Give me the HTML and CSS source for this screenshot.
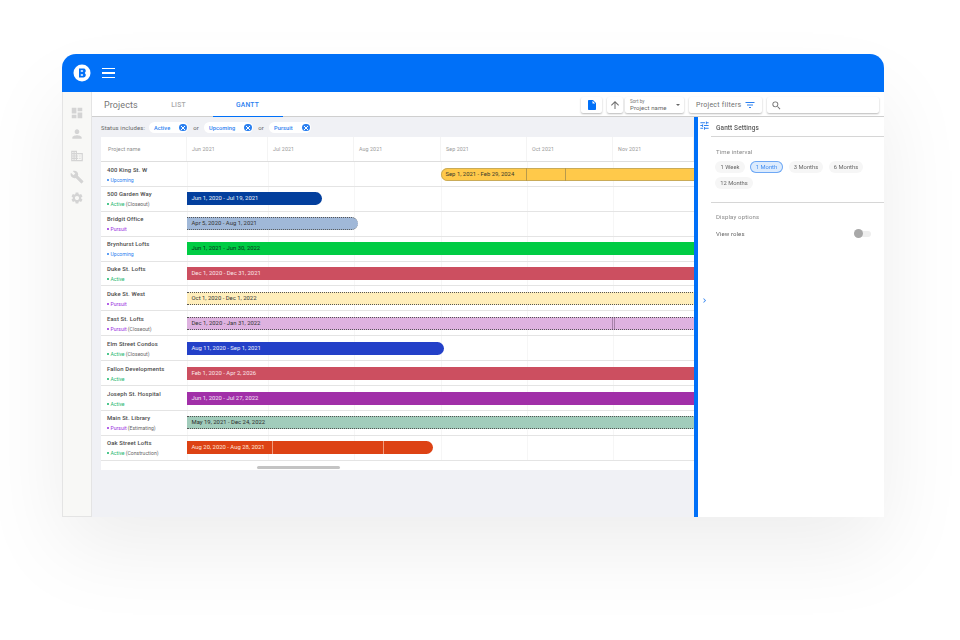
FILE: index.html
```html
<!DOCTYPE html>
<html lang="en">
<head>
<meta charset="utf-8">
<title>Gantt</title>
<link rel="stylesheet" href="styles.css">
</head>
<body>
<div class="window">
  <header class="appbar">
    <svg class="logo" viewBox="0 0 18 18"><circle cx="9" cy="9" r="8.5" fill="#fff"/><path d="M6 4.6h4.6a2.2 2.2 0 0 1 1.5 3.8l-.4.6.4.6a2.2 2.2 0 0 1-1.5 3.8H6z" fill="#0070f8"/><rect x="7.6" y="6.3" width="2.6" height="1.5" rx=".7" fill="#fff"/><rect x="7.6" y="10.2" width="2.6" height="1.5" rx=".7" fill="#fff"/></svg>
    <div class="burger"><span></span><span></span><span></span></div>
  </header>
  <div class="shell">
    <nav class="sidebar">
      <svg class="navicon" viewBox="0 0 24 24"><path d="M3 13h8V3H3v10zm0 8h8v-6H3v6zm10 0h8V11h-8v10zm0-18v6h8V3h-8z"/></svg>
      <svg class="navicon" viewBox="0 0 24 24"><path d="M12 12c2.21 0 4-1.79 4-4s-1.79-4-4-4-4 1.79-4 4 1.79 4 4 4zm0 2c-2.67 0-8 1.34-8 4v2h16v-2c0-2.66-5.33-4-8-4z"/></svg>
      <svg class="navicon" viewBox="0 0 24 24"><path d="M12 7V3H2v18h20V7H12zM6 19H4v-2h2v2zm0-4H4v-2h2v2zm0-4H4V9h2v2zm0-4H4V5h2v2zm4 12H8v-2h2v2zm0-4H8v-2h2v2zm0-4H8V9h2v2zm0-4H8V5h2v2zm10 12h-8v-2h2v-2h-2v-2h2v-2h-2V9h8v10zm-2-8h-2v2h2v-2zm0 4h-2v2h2v-2z"/></svg>
      <svg class="navicon" viewBox="0 0 24 24"><path d="M22.7 19l-9.1-9.1c.9-2.3.4-5-1.5-6.9-2-2-5-2.4-7.4-1.3L9 6 6 9 1.6 4.7C.4 7.1.9 10.1 2.9 12.1c1.9 1.9 4.6 2.4 6.9 1.5l9.1 9.1c.4.4 1 .4 1.4 0l2.3-2.3c.5-.4.5-1.1.1-1.4z"/></svg>
      <svg class="navicon" viewBox="0 0 24 24"><path d="M19.14 12.94c.04-.3.06-.61.06-.94 0-.32-.02-.64-.07-.94l2.03-1.58c.18-.14.23-.41.12-.61l-1.92-3.32c-.12-.22-.37-.29-.59-.22l-2.39.96c-.5-.38-1.03-.7-1.62-.94l-.36-2.54c-.04-.24-.24-.41-.48-.41h-3.84c-.24 0-.43.17-.47.41l-.36 2.54c-.59.24-1.13.57-1.62.94l-2.39-.96c-.22-.08-.47 0-.59.22L2.74 8.87c-.12.21-.08.47.12.61l2.03 1.58c-.05.3-.09.63-.09.94s.02.64.07.94l-2.03 1.58c-.18.14-.23.41-.12.61l1.92 3.32c.12.22.37.29.59.22l2.39-.96c.5.38 1.03.7 1.62.94l.36 2.54c.05.24.24.41.48.41h3.84c.24 0 .44-.17.47-.41l.36-2.54c.59-.24 1.13-.56 1.62-.94l2.39.96c.22.08.47 0 .59-.22l1.92-3.32c.12-.22.07-.47-.12-.61l-2.01-1.58zM12 15.6c-1.98 0-3.6-1.62-3.6-3.6s1.62-3.6 3.6-3.6 3.6 1.62 3.6 3.6-1.62 3.6-3.6 3.6z"/></svg>
    </nav>
    <main class="main">
      <div class="topbar">
        <h1 class="title">Projects</h1>
        <div class="tab tab-list">LIST</div>
        <div class="tab tab-gantt">GANTT</div>
        <div class="tools">
          <button class="tool tool-doc"><svg viewBox="0 0 24 24"><path d="M14 2H6c-1.1 0-2 .9-2 2v16c0 1.1.9 2 2 2h12c1.1 0 2-.9 2-2V8l-6-6zm-1 7V3.5L18.5 9H13z"/></svg></button>
          <button class="tool tool-up"><svg viewBox="0 0 24 24"><path d="M4 12l1.41 1.41L11 7.83V20h2V7.83l5.58 5.59L20 12l-8-8-8 8z"/></svg></button>
          <div class="tool tool-sort"><div class="sort-text"><span class="sort-label">Sort by</span><span class="sort-value">Project name</span></div><i class="caret"></i></div>
          <button class="tool tool-filter"><span>Project filters</span><svg viewBox="0 0 24 24"><path d="M10 18h4v-2h-4v2zM3 6v2h18V6H3zm3 7h12v-2H6v2z"/></svg></button>
          <div class="tool tool-search"><svg viewBox="0 0 24 24"><path d="M15.5 14h-.79l-.28-.27A6.47 6.47 0 0 0 16 9.5 6.5 6.5 0 1 0 9.5 16c1.61 0 3.09-.59 4.23-1.57l.27.28v.79l5 4.99L20.49 19l-4.99-5zm-6 0C7.01 14 5 11.99 5 9.5S7.01 5 9.5 5 14 7.01 14 9.5 11.99 14 9.5 14z"/></svg></div>
        </div>
      </div>
      <div class="content">
        <section class="gantt">
          <div class="filters">
            <span class="filters-label">Status includes:</span>
            <span class="chip chip-active">Active<i class="x"></i></span><span class="or">or</span>
            <span class="chip chip-upcoming">Upcoming<i class="x"></i></span><span class="or">or</span>
            <span class="chip chip-pursuit">Pursuit<i class="x"></i></span>
          </div>
          <div class="table">
            <div class="row head">
              <div class="name-head">Project name</div>
              <div class="months"><span style="width:81px">Jun 2021</span><span style="width:86px">Jul 2021</span><span style="width:87px">Aug 2021</span><span style="width:86px">Sep 2021</span><span style="width:86px">Oct 2021</span><span style="width:81px">Nov 2021</span></div>
            </div>

            <div class="row">
              <div class="name"><b>400 King St. W</b><small><em class="st-up">Upcoming</em></small></div>
              <div class="track"><div class="bar yellow" style="margin-left:254px;width:300px"><span class="seg" style="width:86px">Sep 1, 2021 - Feb 29, 2024</span><span class="seg" style="width:39px"></span></div></div>
            </div>
            <div class="row">
              <div class="name"><b>500 Garden Way</b><small><em class="st-act">Active</em> (Closeout)</small></div>
              <div class="track"><div class="bar navy end" style="width:135px"><span class="seg">Jun 1, 2020 - Jul 19, 2021</span></div></div>
            </div>
            <div class="row">
              <div class="name"><b>Bridgit Office</b><small><em class="st-pur">Pursuit</em></small></div>
              <div class="track"><div class="bar slate dash end" style="width:171px"><span class="seg">Apr 5, 2020 - Aug 1, 2021</span></div></div>
            </div>
            <div class="row">
              <div class="name"><b>Brynhurst Lofts</b><small><em class="st-up">Upcoming</em></small></div>
              <div class="track"><div class="bar green" style="width:560px"><span class="seg">Jun 1, 2021 - Jun 30, 2022</span></div></div>
            </div>
            <div class="row">
              <div class="name"><b>Duke St. Lofts</b><small><em class="st-act">Active</em></small></div>
              <div class="track"><div class="bar rose" style="width:560px"><span class="seg">Dec 1, 2020 - Dec 31, 2021</span></div></div>
            </div>
            <div class="row">
              <div class="name"><b>Duke St. West</b><small><em class="st-pur">Pursuit</em></small></div>
              <div class="track"><div class="bar cream dash" style="width:560px"><span class="seg">Oct 1, 2020 - Dec 1, 2022</span></div></div>
            </div>
            <div class="row">
              <div class="name"><b>East St. Lofts</b><small><em class="st-pur">Pursuit</em> (Closeout)</small></div>
              <div class="track"><div class="bar lilac dash" style="width:560px"><span class="seg seg-split" style="width:420px">Dec 1, 2020 - Jan 31, 2022</span></div></div>
            </div>
            <div class="row">
              <div class="name"><b>Elm Street Condos</b><small><em class="st-act">Active</em> (Closeout)</small></div>
              <div class="track"><div class="bar blue end" style="width:257px"><span class="seg">Aug 11, 2020 - Sep 1, 2021</span></div></div>
            </div>
            <div class="row">
              <div class="name"><b>Fallon Developments</b><small><em class="st-act">Active</em></small></div>
              <div class="track"><div class="bar rose" style="width:560px"><span class="seg">Feb 1, 2020 - Apr 2, 2026</span></div></div>
            </div>
            <div class="row">
              <div class="name"><b>Joseph St. Hospital</b><small><em class="st-act">Active</em></small></div>
              <div class="track"><div class="bar purple" style="width:560px"><span class="seg">Jun 1, 2020 - Jul 27, 2022</span></div></div>
            </div>
            <div class="row">
              <div class="name"><b>Main St. Library</b><small><em class="st-pur">Pursuit</em> (Estimating)</small></div>
              <div class="track"><div class="bar mint dash" style="width:560px"><span class="seg">May 19, 2021 - Dec 24, 2022</span></div></div>
            </div>
            <div class="row">
              <div class="name"><b>Oak Street Lofts</b><small><em class="st-act">Active</em> (Construction)</small></div>
              <div class="track"><div class="bar orange end" style="width:246px"><span class="seg seg-light" style="width:86px">Aug 20, 2020 - Aug 28, 2021</span><span class="seg seg-light" style="width:111px"></span></div></div>
            </div>
            <div class="scrollzone"><div class="scrollthumb"></div></div>
          </div>
        </section>
        <div class="splitter"></div>
        <aside class="panel">
          <div class="gutter">
            <svg class="tune" viewBox="0 0 24 24"><path d="M3 17v2h6v-2H3zM3 5v2h10V5H3zm10 16v-2h8v-2h-8v-2h-2v6h2zM7 9v2H3v2h4v2h2V9H7zm14 4v-2H11v2h10zm-6-4h2V7h4V5h-4V3h-2v6z"/></svg>
            <svg class="chev" viewBox="0 0 24 24"><path d="M10 6L8.59 7.41 13.17 12l-4.58 4.59L10 18l6-6z"/></svg>
          </div>
          <div class="panel-body">
            <h2 class="panel-title">Gantt Settings</h2>
            <div class="section">
              <div class="section-label">Time interval</div>
              <div class="pills">
                <span class="pill pill-week">1 Week</span>
                <span class="pill pill-month">1 Month</span>
                <span class="pill pill-m">3 Months</span>
                <span class="pill pill-m">6 Months</span>
                <span class="pill pill-y">12 Months</span>
              </div>
            </div>
            <div class="section section-display">
              <div class="section-label">Display options</div>
              <div class="option"><span>View roles</span><span class="switch"><i></i></span></div>
            </div>
          </div>
        </aside>
      </div>
    </main>
  </div>
</div>
</body>
</html>
```
FILE: styles.css
```css
* { box-sizing: border-box; }
html, body { margin: 0; height: 100%; }
body {
  background: #fff;
  overflow: hidden;
  font-family: Roboto, "Liberation Sans", sans-serif;
  padding: 54px 76px 0 62px;
}
.window {
  width: 822px;
  height: 463px;
  border-radius: 14px 14px 0 0;
  overflow: hidden;
  display: flex;
  flex-direction: column;
  background: #fff;
  filter: blur(.32px);
}
body::before {
  content: "";
  position: absolute;
  left: 62px; top: 70px;
  width: 822px; height: 447px;
  box-shadow: 0 30px 80px rgba(0,0,0,.075);
  z-index: -1;
}
.appbar {
  height: 38px;
  background: #0070f8;
  display: flex;
  align-items: center;
  padding-left: 11px;
  flex: none;
}
.logo { width: 18px; height: 18px; }
.burger { margin-left: 11px; display: flex; flex-direction: column; gap: 3px; width: 13px; }
.burger span { display: block; height: 1.6px; background: #fff; }
.shell { flex: 1; display: flex; min-height: 0; }
.sidebar {
  width: 30px;
  background: #f8f8f6;
  border-left: 1px solid #e4e4e4;
  border-right: 1px solid #e4e4e4;
  border-bottom: 1px solid #e4e4e4;
  display: flex;
  flex-direction: column;
  align-items: center;
  padding-top: 14px;
  gap: 7.3px;
  flex: none;
}
.navicon { width: 14px; height: 14px; fill: #d4d4d4; }
.main { flex: 1; display: flex; flex-direction: column; min-width: 0; }
.topbar {
  height: 25px;
  flex: none;
  background: #fff;
  border-bottom: 1px solid #cfcfcf;
  display: flex;
  align-items: stretch;
  padding-left: 12px;
}
.title { margin: 0; width: 56.5px; font-size: 9px; font-weight: 400; color: #757575; line-height: 26px; letter-spacing: .1px; }
.tab { font-size: 6.7px; line-height: 27px; text-align: center; font-weight: 500; letter-spacing: .25px; }
.tab-list { width: 36px; color: #a8a8a8; }
.tab-gantt { width: 70px; margin-left: 16px; color: #2b80f0; border-bottom: 1px solid #0070f8; height: 25px; }
.tools { margin-left: auto; padding: 5px 5px 0 0; display: flex; gap: 5px; align-items: flex-start; }
.tool {
  height: 16px;
  background: #fff;
  border: 0;
  border-radius: 2px;
  padding: 0;
  box-shadow: 0 1px 2px rgba(0,0,0,.28);
  display: flex;
  align-items: center;
  font-family: inherit;
}
.tool svg { width: 12px; height: 12px; flex: none; }
.tool-doc { width: 21px; justify-content: center; }
.tool-doc svg { fill: #0070f8; }
.tool-up { width: 16px; justify-content: center; }
.tool-up svg { fill: #6e6e6e; }
.tool-sort { width: 59px; margin-left: -3px; padding: 0 4px 0 5px; justify-content: space-between; }
.sort-text { display: flex; flex-direction: column; }
.sort-label { font-size: 4.6px; line-height: 5px; color: #777; }
.sort-value { font-size: 6px; line-height: 7px; color: #666; letter-spacing: .1px; }
.caret { width: 0; height: 0; border: 2.2px solid transparent; border-top: 2.2px solid #666; border-bottom: 0; }
.tool-filter { width: 73px; padding: 0 6px 0 7px; justify-content: space-between; font-size: 7px; color: #707070; letter-spacing: .25px; }
.tool-filter svg { fill: #2b80f0; }
.tool-search { width: 112px; padding-left: 4px; }
.tool-search svg { width: 11px; height: 11px; fill: #707070; }

.content { flex: 1; display: flex; min-height: 0; }
.gantt { width: 602px; background: #f0f1f5; padding-left: 9px; flex: none; }
.filters { height: 20px; padding-top: 1px; display: flex; align-items: center; font-size: 6px; color: #666; letter-spacing: .1px; }
.filters-label { width: 48px; }
.chip {
  height: 11px;
  background: #fff;
  border-radius: 6px;
  display: flex;
  align-items: center;
  justify-content: space-between;
  color: #2b80f0;
  font-size: 5.6px;
  font-weight: 500;
  padding: 0 1.5px 0 5px;
}
.chip-active { width: 39px; }
.chip-upcoming { width: 49px; }
.chip-pursuit { width: 42px; }
.or { width: 16px; text-align: center; font-size: 6px; }
.x { width: 7.5px; height: 7.5px; border-radius: 50%; background: #2b80f0; position: relative; flex: none; }
.x::before { content: ""; position: absolute; left: 1.75px; top: 1.75px; width: 4px; height: 4px; background:
  linear-gradient(45deg, transparent 42%, #fff 42%, #fff 58%, transparent 58%),
  linear-gradient(-45deg, transparent 42%, #fff 42%, #fff 58%, transparent 58%); }

.table { background: #fff; width: 593px; }
.row { display: flex; height: 24.9px; border-bottom: 1px solid #e4e4e4; }
.head { height: 25px; border-bottom: 1px solid #dedede; }
.name-head { width: 86px; padding-left: 7px; font-size: 5.3px; color: #8e8e8e; line-height: 24px; border-right: 1px solid #f4f4f4; flex: none; letter-spacing: .1px; }
.months { display: flex; flex: 1; overflow: hidden; }
.months span { flex: none; font-size: 5.3px; color: #999; line-height: 24px; padding-left: 5px; letter-spacing: .1px; border-right: 1px solid #f4f4f4; }
.name { width: 86px; flex: none; padding: 3.5px 0 0 6px; overflow: hidden; white-space: nowrap; }
.name b { display: block; font-size: 5.9px; line-height: 8px; font-weight: 500; color: #4a4a4a; letter-spacing: .12px; }
.name small { display: block; margin-top: 3px; font-size: 5.1px; line-height: 6px; color: #666; }
.name em { font-style: normal; }
.name em::before { content: ""; display: inline-block; width: 2px; height: 2px; border-radius: 50%; background: currentColor; margin: 0 1.5px 1px 0; }
.st-up { color: #2b80f0; }
.st-act { color: #14b56a; }
.st-pur { color: #9a2ee0; }
.track {
  flex: 1;
  min-width: 0;
  overflow: hidden;
  padding-top: 5.5px;
  background:
    linear-gradient(#f6f6f6,#f6f6f6) 0 0/1px 100% no-repeat,
    linear-gradient(#f6f6f6,#f6f6f6) 81px 0/1px 100% no-repeat,
    linear-gradient(#f6f6f6,#f6f6f6) 167px 0/1px 100% no-repeat,
    linear-gradient(#f6f6f6,#f6f6f6) 254px 0/1px 100% no-repeat,
    linear-gradient(#f6f6f6,#f6f6f6) 340px 0/1px 100% no-repeat,
    linear-gradient(#f6f6f6,#f6f6f6) 426px 0/1px 100% no-repeat;
}
.bar { height: 13px; display: flex; font-size: 5.9px; line-height: 12.5px; white-space: nowrap; }
.seg { display: block; padding-left: 4.5px; flex: none; height: 100%; }
.end { border-radius: 0 6.5px 6.5px 0; }
.dash { border-top: 1px dotted #555; border-bottom: 1px dotted #555; line-height: 11px; }
.yellow { background: #ffc94a; color: #3a3a2a; border-radius: 6.5px 0 0 6.5px; box-shadow: inset 0 0 0 1px #c9ab58; }
.yellow .seg { border-right: 1px solid #b89a4c; }
.navy { background: #033f9d; color: #eef2fa; }
.slate { background: #a0b8d8; color: #333; }
.green { background: #00cc44; color: #07331b; }
.rose { background: #cc4f60; color: #fae6e8; }
.cream { background: #ffeebb; color: #333; }
.lilac { background: #deb2e0; color: #333; }
.blue { background: #2340c8; color: #eef0fb; }
.purple { background: #a12fa8; color: #f4e4f5; }
.mint { background: #a1ccbb; color: #2b2b2b; }
.orange { background: #dd4214; color: #fde8df; }
.seg-split { border-right: 3px double #a883aa; box-sizing: content-box; }
.seg-light { border-right: 1px solid #f09d80; }
.scrollzone { height: 9px; padding: 5px 0 0 156px; }
.scrollthumb { width: 83px; height: 3.5px; border-radius: 2px; background: #c4c4c4; }

.splitter { width: 4px; background: #0070f8; flex: none; }
.panel { flex: 1; display: flex; background: #fff; min-width: 0; }
.gutter { width: 13px; flex: none; display: flex; flex-direction: column; align-items: center; }
.tune { width: 11px; height: 11px; fill: #2b80f0; margin-top: 3px; }
.chev { width: 9px; height: 9px; fill: #2b80f0; margin-top: 165px; }
.panel-body { flex: 1; min-width: 0; }
.panel-title { margin: 0; height: 20px; border-bottom: 1px solid #d6d6d6; padding-left: 5px; font-size: 6.5px; line-height: 22px; font-weight: 500; color: #5a5a5a; letter-spacing: .1px; }
.section { padding: 11px 0 0 5px; border-bottom: 1px solid #d6d6d6; height: 66px; }
.section-display { border: 0; padding-top: 10px; }
.section-label { font-size: 6px; line-height: 8px; color: #888; letter-spacing: .15px; }
.pills { display: flex; flex-wrap: wrap; gap: 4px 5px; margin-top: 5px; margin-left: -1px; width: 150px; }
.pill { height: 12px; border-radius: 6px; background: #f6f6f6; font-size: 5.8px; line-height: 12px; text-align: center; color: #666; }
.pill-week { width: 30px; }
.pill-month { width: 33px; background: #dcebfd; color: #3d8bf2; box-shadow: inset 0 0 0 1px #6ea8f5; }
.pill-m { width: 34px; margin-left: 1px; }
.pill-y { width: 38px; }
.option { display: flex; justify-content: space-between; align-items: center; margin-top: 9px; padding-right: 13px; font-size: 6px; color: #666; letter-spacing: .1px; }
.switch { width: 17px; height: 6px; border-radius: 3px; background: #eee; position: relative; display: block; }
.switch i { position: absolute; left: 0; top: -1.5px; width: 9px; height: 9px; border-radius: 50%; background: #a8a8a8; }
```
